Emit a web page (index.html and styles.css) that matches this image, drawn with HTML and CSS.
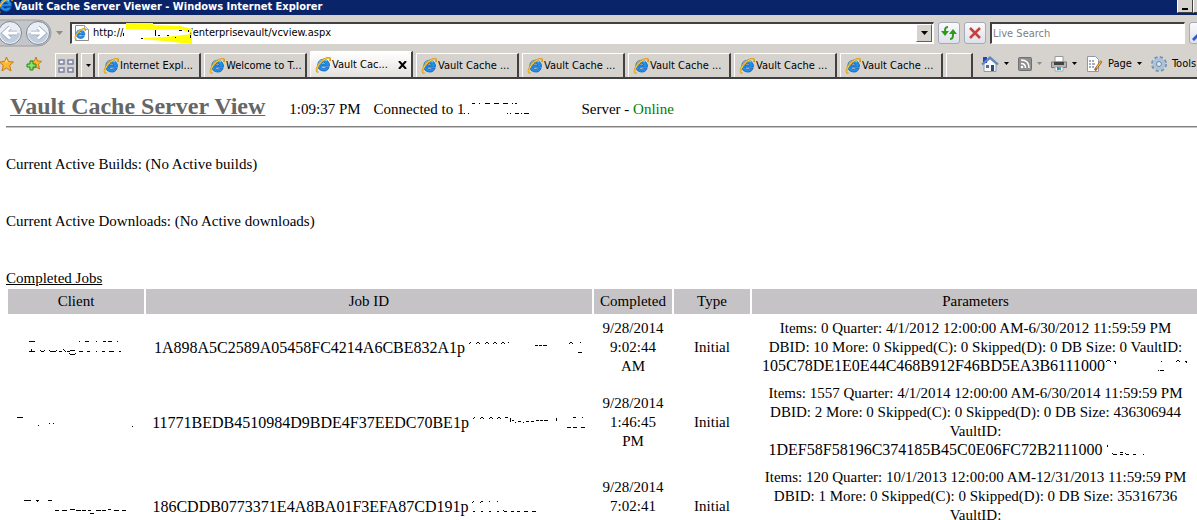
FILE: index.html
```html
<!DOCTYPE html>
<html lang="en">
<head>
  <meta charset="UTF-8">
  <title>Vault Cache Server Viewer</title>
  <link rel="stylesheet" href="styles.css">
</head>
<body>

<!-- shared icons -->
<svg class="defs" width="0" height="0">
  <symbol id="ie" viewBox="0 0 16 16">
    <path d="M8.500 2.200a5.900 5.900 0 1 0 5.600 8.200h-3.700a2.700 2.700 0 0 1-4.600-1.200h8.600a5.900 5.900 0 0 0-5.900-7zM5.900 6.900a2.700 2.700 0 0 1 5 0z" fill="#1e90ec" fill-rule="evenodd" stroke="#1560b8" stroke-width=".8"/>
    <path d="M4 7a4.800 4.800 0 0 1 8-3" fill="none" stroke="#6fd0ff" stroke-width="1.200"/>
    <path d="M3.400 15C0 15 1.800 9 6 5 9.500 1.500 14.500-.6 15.200 1.800c.1.700-.1 1.400-.5 2.200" fill="none" stroke="#d99a10" stroke-width="1.800"/>
    <path d="M3 14.600C.6 14 2.400 8.800 6.300 5 9.600 1.800 14 .2 14.800 1.800" fill="none" stroke="#ffd24a"/>
  </symbol>
  <symbol id="down" viewBox="0 0 7 4"><path d="M0 0h7L3.500 4z" fill="currentColor"/></symbol>
</svg>

<header class="chrome">
  <div class="titlebar">
    <svg class="ie" width="16" height="16"><use href="#ie"/></svg>
    <span class="caption">Vault Cache Server Viewer - Windows Internet Explorer</span>
    <button class="winbtn" aria-label="Minimize"></button>
    <button class="winbtn" aria-label="Restore"></button>
  </div>

  <div class="navbar">
    <div class="history">
      <svg width="52" height="28" viewBox="0 0 52 28">
        <path d="M-4 1h42a13 13 0 0 1 0 26H-4z" fill="#c3c5c9" stroke="#9a9da3"/>
        <circle cx="10" cy="14" r="11.500" fill="#e9edf4" stroke="#7c8794"/>
        <circle cx="38" cy="14" r="11.500" fill="#e9edf4" stroke="#7c8794"/>
        <path d="M0 14a10 10 0 0 0 20 0zM28 14a10 10 0 0 0 20 0z" fill="#c0cddf"/>
        <path d="M17 14H5m5-5.500L4 14l6 5.500M31 14h12m-5-5.500l6 5.500-6 5.500" fill="none" stroke="#9cabc0" stroke-width="4.500"/>
        <path d="M17 14H5m5-5.500L4 14l6 5.500M31 14h12m-5-5.500l6 5.500-6 5.500" fill="none" stroke="#fff" stroke-width="3"/>
      </svg>
      <svg class="muted" width="7" height="4"><use href="#down"/></svg>
    </div>
    <div class="address">
      <svg width="16" height="16" viewBox="0 0 16 16">
        <path d="M1.500.5h9l4 4v11h-13z" fill="#fff" stroke="#8c8c8c"/>
        <path d="M10.500.5v4h4" fill="#eee" stroke="#a9a9a9"/>
        <use href="#ie" x="0" y="3" width="12" height="12"/>
      </svg>
      <div class="url">
        <input type="text" aria-label="Address" value="http://&nbsp;&nbsp;&nbsp;&nbsp;&nbsp;&nbsp;&nbsp;&nbsp;&nbsp;&nbsp;&nbsp;&nbsp;&nbsp;&nbsp;&nbsp;&nbsp;&nbsp;&nbsp;&nbsp;&nbsp;&nbsp;/enterprisevault/vcview.aspx">
        <svg class="mark" width="72" height="22" viewBox="0 0 72 22">
          <path d="M4 1h27v2l27 1 12 3v4L58 7 31 8 4 7zM22 16l20-1 28-3v10l-11-1-8-1-29-3z" fill="#ff0"/>
          <path d="M1.500 11v3M19 16.500h2M33.500 8v6M36 13.500h2M45 13.500h2M53 15.500h1M57 8.500h3M66.500 8v2M68.500 13v3" stroke="#000" fill="none"/>
        </svg>
      </div>
      <button class="drop" aria-label="Show addresses"><svg width="7" height="4"><use href="#down"/></svg></button>
    </div>
    <button class="round" aria-label="Refresh">
      <svg width="16" height="14" viewBox="0 0 16 14">
        <path d="M7 1C4 1 4 3 4 6M9 13c3 0 3-2 3-5" fill="none" stroke="#2f9a1c" stroke-width="2"/>
        <path d="M0 5h8L4 10zM8 8h8l-4-5z" fill="#2f9a1c"/>
      </svg>
    </button>
    <button class="round" aria-label="Stop">
      <svg width="12" height="12" viewBox="0 0 12 12"><path d="M1 1l10 10M11 1L1 11" stroke="#c84040" stroke-width="2.500"/></svg>
    </button>
    <input class="search" type="text" aria-label="Search" placeholder="Live Search">
    <button class="round last" aria-label="Search">
      <svg width="16" height="16" viewBox="0 0 16 16"><circle cx="10" cy="6" r="4" fill="none" stroke="#2a5bd0" stroke-width="2"/><path d="M7 9l-6 6" stroke="#2a5bd0" stroke-width="3"/></svg>
    </button>
  </div>

  <div class="tabbar">
    <div class="favs">
      <svg width="16" height="16" viewBox="0 0 16 16"><path d="M6.500 1l2 4.500 5 .5-3.800 3.400L11 15l-4.500-3L2 15l1.300-5.600L-.5 6l5-.5z" fill="#fdb933" stroke="#c77a12"/><path d="M6.500 3l1.300 3.500h-3z" fill="#ffe08a"/></svg>
      <svg width="16" height="16" viewBox="0 0 16 16"><path d="M10 1l1.600 4 4 .3-3.200 2.700 1.200 5L10 11l-4 2 1-5-3-2.700 4.400-.3z" fill="#fdb933" stroke="#c77a12"/><path d="M4 5h3v3h3v3H7v3H4v-3H1V8h3z" fill="#8fe070" stroke="#1d8a14"/></svg>
    </div>
    <button class="tab quad" aria-label="Quick Tabs">
      <svg width="16" height="14" viewBox="0 0 16 14"><path d="M1 1h5v4H1zM10 1h5v4h-5zM1 9h5v4H1zM10 9h5v4h-5z" fill="#eef" stroke="#7c84a0" stroke-width="1.500"/></svg>
    </button>
    <button class="tab list" aria-label="Tab List"><svg width="5" height="3"><use href="#down"/></svg></button>
    <button class="tab"><svg class="ie" width="16" height="16"><use href="#ie"/></svg>Internet Expl...</button>
    <button class="tab"><svg class="ie" width="16" height="16"><use href="#ie"/></svg>Welcome to T...</button>
    <button class="tab active"><svg class="ie" width="16" height="16"><use href="#ie"/></svg>Vault Cac...
      <svg class="close" width="9" height="8" viewBox="0 0 9 8"><path d="M1 0l7 8M8 0L1 8" stroke="#000" stroke-width="2"/></svg>
    </button>
    <button class="tab"><svg class="ie" width="16" height="16"><use href="#ie"/></svg>Vault Cache ...</button>
    <button class="tab"><svg class="ie" width="16" height="16"><use href="#ie"/></svg>Vault Cache ...</button>
    <button class="tab"><svg class="ie" width="16" height="16"><use href="#ie"/></svg>Vault Cache ...</button>
    <button class="tab"><svg class="ie" width="16" height="16"><use href="#ie"/></svg>Vault Cache ...</button>
    <button class="tab"><svg class="ie" width="16" height="16"><use href="#ie"/></svg>Vault Cache ...</button>
    <button class="tab new" aria-label="New Tab"></button>
    <div class="commands">
      <button aria-label="Home">
        <svg width="18" height="16" viewBox="0 0 18 16"><path d="M3 8v7.500h12V8L9 3z" fill="#f8f8f8" stroke="#8f9ab0"/><path d="M2 1h4v6H2z" fill="#2a3fc0"/><path d="M1 8.500L9 1.500l8 7" fill="none" stroke="#5f86bd" stroke-width="2.200"/><path d="M5 9h3v3H5z" fill="#4a6fa5"/><path d="M10 9h3v6h-3z" fill="#2b4a78"/></svg>
        <svg width="5" height="3"><use href="#down"/></svg>
      </button>
      <button aria-label="Feeds">
        <svg width="14" height="14" viewBox="0 0 14 14"><rect x=".5" y=".5" width="13" height="13" rx="1" fill="#8f8f8f" stroke="#707070"/><path d="M3 3q8 0 8 8M3 6.500q4.500 0 4.500 4.500" fill="none" stroke="#fff" stroke-width="1.500"/><circle cx="4" cy="10" r="1.300" fill="#fff"/></svg>
        <svg class="muted" width="5" height="3"><use href="#down"/></svg>
      </button>
      <button aria-label="Print">
        <svg width="16" height="16" viewBox="0 0 16 16"><path d="M4 .5h8V6H4z" fill="#fff" stroke="#999"/><path d="M.5 6h15v5.500H.5z" fill="#b4b4b8" stroke="#777"/><path d="M3 7.500h10" stroke="#444" stroke-width="3"/><path d="M4 11h8v4H4z" fill="#fff" stroke="#aaa"/><path d="M6 11h2v3H6z" fill="#2a85d8"/><path d="M8 11h2v3H8z" fill="#2cb8a0"/></svg>
        <svg width="5" height="3"><use href="#down"/></svg>
      </button>
      <button>
        <svg width="17" height="16" viewBox="0 0 17 16"><path d="M1.500.5h8l3 3v12h-11z" fill="#fff" stroke="#8f98ad"/><path d="M3 5h2m1 0h2M3 8h2m1 0h3M3 11h2m1 0h2" stroke="#4a5a8a"/><path d="M15.500 5l-5 7-1.500 2.500" fill="none" stroke="#a86a2c" stroke-width="2.500"/><path d="M15 5.500l-4.500 6.500" stroke="#fc4"/></svg>
        <span>Page</span>
        <svg width="5" height="3"><use href="#down"/></svg>
      </button>
      <button>
        <svg width="16" height="16" viewBox="0 0 16 16"><circle cx="8" cy="8" r="6.500" fill="none" stroke="#7d93ad" stroke-width="3" stroke-dasharray="3 2.100"/><circle cx="8" cy="8" r="4.500" fill="none" stroke="#a9c4de" stroke-width="3.500"/><circle cx="8" cy="8" r="2.500" fill="#e6e6e6" stroke="#6d849f"/></svg>
        <span>Tools</span>
      </button>
    </div>
  </div>
</header>

<main>
  <div class="status">
    <h1>Vault Cache Server View</h1>
    <span class="time">1:09:37 PM</span>
    <span class="host">Connected to 1<svg class="scrap" width="68" height="11" viewBox="0 0 68 11"><path d="M8 .5h3M15 .5h1M21 .5h5M30 .5h5M39 .5h5M48 .5h1M51 .5h2M0 10.500h1M4 10.500h1M43 10.500h1M46 9.500v1M51 10.500h4M57 10.500h1M60 10.500h5"/></svg></span>
    <span>Server - <span class="online">Online</span></span>
  </div>

  <p>Current Active Builds: (No Active builds)</p>
  <p>Current Active Downloads: (No Active downloads)</p>

  <table>
    <caption>Completed Jobs</caption>
    <colgroup>
      <col class="client"><col class="job"><col class="completed"><col class="type"><col>
    </colgroup>
    <thead>
      <tr><th>Client</th><th>Job ID</th><th>Completed</th><th>Type</th><th>Parameters</th></tr>
    </thead>
    <tbody>
      <tr>
        <td><svg class="scrap low" width="94" height="14" viewBox="0 0 94 14"><path d="M0 .5h6M50 .5h1M56 .5h4M67 .5h1M74 .5h3M79 .5h4M88 .5h1M2.500 8v2M0 10.500h6M11 9.500h1M12 10.500h3M15 9.500h1M20 9.500h1M21 10.500h6M27 9.500h1M30 10.500h3M34 8.500l3 2M38 10.500h3M41 9.500h5M40 12.500h1M41 13.500h5M46 12.500h1M50 10.500h4M58 10.500h3M67 10.500h1M73 10.500h3M80 10.500h5M90 10.500h2"/></svg></td>
        <td class="id">1A898A5C2589A05458FC4214A6CBE832A1p<svg class="scrap" width="119" height="11" viewBox="0 0 119 11"><path d="M4 1.500h1M5 .5h1M11 1.500h1M12 .5h2M14 1.500h1M20 1.500h1M21 .5h2M23 1.500h1M28 1.500h1M29 .5h2M31 1.500h1M36 1.500h1M37 .5h2M39 1.500h1M43 .5h1M70 3.500h3M74 3.500h3M78 3.500h4M104 1.500h1M105 .5h2M107 1.500h1M115 .5h1M113 10.500h4"/></svg></td>
        <td>9/28/2014<br>9:02:44<br>AM</td>
        <td>Initial</td>
        <td>Items: 0 Quarter: 4/1/2012 12:00:00 AM-6/30/2012 11:59:59 PM<br>DBID: 10 More: 0 Skipped(C): 0 Skipped(D): 0 DB Size: 0 VaultID:<br><span class="id">105C78DE1E0E44C468B912F46BD5EA3B6111000<svg class="scrap" width="84" height="11" viewBox="0 0 84 11"><path d="M1 1.500h1M2 .5h3M5 1.500h1M9 1.500h1M10 .5v3M56 .5v1M53 10.500h1M55 10.500h4M71 1.500h1M72 .5h2M74 1.500h1M80 1.500h1M81 .5v2"/></svg></span></td>
      </tr>
      <tr>
        <td><svg class="scrap" width="118" height="11" viewBox="0 0 118 11"><path d="M0 1.500h6M21 9.500h1M32 7.500h1M36 7.500h1M115 10.500h1"/></svg></td>
        <td class="id">11771BEDB4510984D9BDE4F37EEDC70BE1p<svg class="scrap" width="117" height="11" viewBox="0 0 117 11"><path d="M4 1.500h1M5 .5h1M11 1.500h1M12 .5h2M14 1.500h1M20 1.500h1M21 .5h2M23 1.500h1M28 1.500h1M29 .5h2M31 1.500h1M36 .5h3M41 .5v4M43 3.500h2M46 5.500h1M49 4.500h3M54 5.500h1M57 4.500h3M62 4.500h3M67 3.500h3M71 3.500h3M75 3.500h4M87 .5v3M104 .5h3M113 .5h1M98 10.500h4M104 10.500h4M112 10.500h4"/></svg></td>
        <td>9/28/2014<br>1:46:45<br>PM</td>
        <td>Initial</td>
        <td>Items: 1557 Quarter: 4/1/2014 12:00:00 AM-6/30/2014 11:59:59 PM<br>DBID: 2 More: 0 Skipped(C): 0 Skipped(D): 0 DB Size: 436306944<br>VaultID:<br><span class="id">1DEF58F58196C374185B45C0E06FC72B2111000<svg class="scrap" width="80" height="11" viewBox="0 0 80 11"><path d="M5 .5v2M10 9.500h1M11 10.500h4M18 8.500h3M18 10.500h3M23 9.500h1M24 10.500h3M31 10.500h3M41 10.500h1"/></svg></span></td>
      </tr>
      <tr>
        <td><svg class="scrap low" width="104" height="14" viewBox="0 0 104 14"><path d="M0 .5h7M12 .5h3M24 .5h4M13 1.500h1M31 10.500h4M38 10.500h5M46 9.500h5M52 10.500h5M58 10.500h4M64 10.500h3M66 13.500h4M72 10.500h5M78 10.500h4M84 9.500h3M90 10.500h5M98 10.500h4"/></svg></td>
        <td class="id">186CDDB0773371E4A8BA01F3EFA87CD191p<svg class="scrap" width="117" height="11" viewBox="0 0 117 11"><path d="M3 1.500h1M4 .5h1M11 1.500h1M12 .5h2M20 .5h1M28 .5h1M4 10.500h2M12 10.500h2M20 10.500h2M28 10.500h2M34 9.500h1M35 10.500h3M42 10.500h3M48 10.500h3M55 10.500h4M63 10.500h4"/></svg></td>
        <td>9/28/2014<br>7:02:41<br>PM</td>
        <td>Initial</td>
        <td>Items: 120 Quarter: 10/1/2013 12:00:00 AM-12/31/2013 11:59:59 PM<br>DBID: 1 More: 0 Skipped(C): 0 Skipped(D): 0 DB Size: 35316736<br>VaultID:<br>&nbsp;</td>
      </tr>
    </tbody>
  </table>
</main>

</body>
</html>
```

FILE: styles.css
```css
* { box-sizing: border-box; }
html { overflow: hidden; }
body {
  margin: 0;
  background-color: #fff;
  color: #000;
  font: 15px/19px "Liberation Serif", "Times New Roman", serif;
}
svg { flex: none; }
.defs { position: absolute; }
button { padding: 0; border: none; background: none; font: inherit; color: inherit; }
input { font: inherit; }

/* browser window */
.chrome {
  background-color: #d6d3ce;
  border-bottom: 2px solid #404040;
  font: 11px/14px "DejaVu Sans Condensed", Tahoma, sans-serif;
  overflow: hidden;
}
.titlebar {
  display: flex;
  height: 15px;
  background-color: #0a246a;
  color: #fff;
  font-weight: bold;
  line-height: 13px;
  overflow: hidden;
}
.titlebar .ie { margin: -3px 1px 0 -3px; }
.caption { flex: 1; }
.winbtn {
  width: 16px;
  height: 13px;
  border: 1px solid #404040;
  border-top: none;
  border-left-color: #fff;
  background: linear-gradient(#000, #000) 4px 8px / 6px 2px no-repeat #d6d3ce;
}
.winbtn:last-child { margin-right: -12px; }

.navbar {
  display: flex;
  align-items: center;
  gap: 4px;
  height: 35px;
}
.history { display: flex; align-items: center; gap: 4px; width: 66px; }
.muted { color: #8c8c8c; }
.address {
  display: flex;
  align-items: center;
  flex: 1;
  height: 22px;
  padding: 0 1px 0 2px;
  background-color: #fff;
  border: 1px solid #fff;
  border-top: 2px solid #404040;
  border-left: 2px solid #404040;
}
.url { position: relative; flex: 1; }
.url input { display: block; width: 100%; padding: 0 0 0 3px; border: none; outline: none; }
.mark { position: absolute; left: 32px; top: -4px; }
.drop {
  width: 16px;
  height: 18px;
  background-color: #d6d3ce;
  border: 1px solid #fff;
  border-right-color: #606060;
  border-bottom-color: #606060;
}
.drop svg, .round svg { display: block; margin: auto; }
.round {
  width: 22px;
  height: 22px;
  border: 1px solid #a5abb8;
  border-radius: 3px;
  background: linear-gradient(#fafafc, #dfe1ea);
}
.search {
  width: 195px;
  height: 22px;
  padding: 0 1px;
  border: 1px solid #fff;
  border-top: 2px solid #404040;
  border-left: 2px solid #404040;
}
.search::placeholder { color: #808080; opacity: 1; }
.round.last { margin-right: -14px; }

.tabbar { display: flex; align-items: flex-end; gap: 3px; height: 27px; }
.favs { display: flex; flex: none; align-self: center; gap: 10px; width: 52px; }
.tab {
  display: flex;
  flex: none;
  align-items: center;
  gap: 1px;
  width: 103px;
  height: 24px;
  padding-left: 4px;
  white-space: nowrap;
  border: 1px solid #fff;
  border-right: 2px solid #404040;
  border-bottom: none;
}
.tab.quad { width: 23px; padding-left: 2px; }
.tab.list { width: 14px; }
.tab.new { width: 27px; }
.tab.active { height: 26px; background: linear-gradient(#fff, #e4e1dd); }
.close { margin-left: auto; margin-right: 4px; }
.commands { display: flex; flex: none; align-self: center; gap: 9px; margin-left: 5px; }
.commands button { display: flex; align-items: center; gap: 5px; }

/* page */
main { padding: 0 6px; }
.status {
  display: flex;
  align-items: baseline;
  height: 48px;
  margin: 0 -6px 28px 0;
  padding: 14px 4px 0;
  border-bottom: 1px solid #808080;
  box-shadow: 0 1px #c8c4c4;
}
h1 {
  margin: 0 24px 0 0;
  color: #666;
  font-size: 24px;
  line-height: 27px;
  text-decoration: underline;
  text-decoration-thickness: 1px;
}
.time { margin-right: 13px; }
.host { margin-right: 49px; }
.online { color: #008000; }
p { margin: 0 0 38px; }

table {
  width: calc(100% + 10px);
  table-layout: fixed;
  border-spacing: 2px;
  text-align: center;
}
caption { line-height: 18px; text-align: left; text-decoration: underline; }
th { background-color: #c6c3c6; font-weight: normal; }
th, td { padding: 3px; white-space: nowrap; }
.client { width: 136px; }
.job { width: 446px; }
.completed { width: 78px; }
.type { width: 76px; }
.id { font-size: 16px; }
span.id { line-height: 16px; }

/* what is left of blanked-out names */
.scrap { fill: none; stroke: #000; shape-rendering: crispEdges; }
.low { vertical-align: -3px; }
```
